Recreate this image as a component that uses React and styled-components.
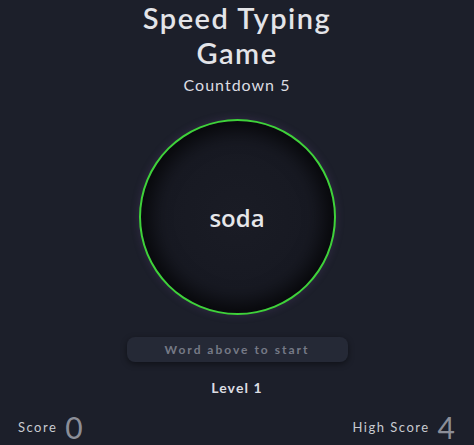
import React from 'react';
import styled, { createGlobalStyle } from 'styled-components';

const GlobalStyle = createGlobalStyle`
  html, body {
    margin: 0;
    padding: 0;
    background: #1c1f2a;
  }
  body {
    font-family: Lato, "Open Sans", sans-serif;
    color: #e4e5e9;
  }
`;

const Page = styled.div`
  width: 474px;
  height: 445px;
  display: flex;
  flex-direction: column;
  align-items: center;
  box-sizing: border-box;
  overflow: hidden;
`;

const Title = styled.h1`
  margin: 0;
  font-size: 29px;
  line-height: 35px;
  font-weight: 600;
  text-align: center;
  color: #e3e4e8;
  letter-spacing: 1.5px;
`;

const Countdown = styled.div`
  margin-top: 5px;
  font-size: 16px;
  line-height: 19px;
  letter-spacing: 1px;
  color: #dcdde2;
`;

const WordCircle = styled.div`
  margin-top: 25px;
  width: 197px;
  height: 196px;
  box-sizing: border-box;
  border-radius: 50%;
  border: 2px solid #3fd23a;
  background: radial-gradient(circle, #1a1c25 0%, #171922 55%, #101118 100%);
  box-shadow: inset 0 0 20px 8px rgba(0, 0, 0, 0.7), 0 0 8px rgba(120, 80, 160, 0.25);
  display: flex;
  align-items: center;
  justify-content: center;
`;

const Word = styled.span`
  font-family: "Open Sans", Lato, sans-serif;
  font-weight: 600;
  font-size: 24px;
  color: #e6e7ea;
`;

const WordInput = styled.input`
  margin-top: 22px;
  width: 221px;
  height: 25px;
  box-sizing: border-box;
  border: none;
  outline: none;
  border-radius: 8px;
  background: #252936;
  box-shadow: 0 2px 6px rgba(0, 0, 0, 0.45);
  font-family: Lato, sans-serif;
  font-weight: 700;
  font-size: 12px;
  letter-spacing: 2px;
  text-align: center;
  color: #c9cbd1;

  &::placeholder {
    color: #767a86;
  }
`;

const Level = styled.div`
  margin-top: 17px;
  font-size: 14px;
  line-height: 17px;
  font-weight: 700;
  letter-spacing: 1.1px;
  color: #dcdde2;
`;

const Footer = styled.div`
  margin-top: 16px;
  width: 100%;
  box-sizing: border-box;
  padding: 0 19px 0 18px;
  display: flex;
  justify-content: space-between;
  align-items: center;
`;

const ScoreBox = styled.div`
  display: flex;
  align-items: center;
  gap: 8px;
`;

const ScoreLabel = styled.span`
  font-size: 13px;
  letter-spacing: 1.5px;
  color: #c9cbd1;
`;

const ScoreValue = styled.span`
  font-size: 30px;
  line-height: 30px;
  color: #8b8e98;
`;

export default function App() {
  return (
    <>
      <GlobalStyle />
      <Page>
        <Title>
          Speed Typing
          <br />
          Game
        </Title>
        <Countdown>Countdown 5</Countdown>
        <WordCircle>
          <Word>soda</Word>
        </WordCircle>
        <WordInput type="text" placeholder="Word above to start" />
        <Level>Level 1</Level>
        <Footer>
          <ScoreBox>
            <ScoreLabel>Score</ScoreLabel>
            <ScoreValue>0</ScoreValue>
          </ScoreBox>
          <ScoreBox>
            <ScoreLabel>High Score</ScoreLabel>
            <ScoreValue>4</ScoreValue>
          </ScoreBox>
        </Footer>
      </Page>
    </>
  );
}
